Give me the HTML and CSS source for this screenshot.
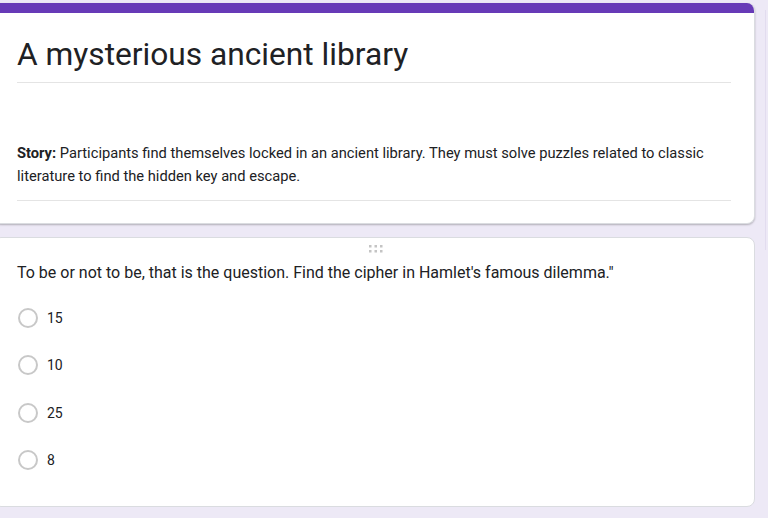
FILE: index.html
```html
<!DOCTYPE html>
<html>
<head>
<meta charset="utf-8">
<link rel="stylesheet" href="styles.css">
</head>
<body>
<div class="page">
  <div class="card header-card">
    <div class="accent"></div>
    <div class="header-body">
      <h1 class="title">A mysterious ancient library</h1>
      <div class="divider"></div>
      <p class="story"><b>Story:</b> Participants find themselves locked in an ancient library. They must solve puzzles related to classic literature to find the hidden key and escape.</p>
      <div class="divider"></div>
    </div>
  </div>
  <div class="card question-card">
    <div class="handle">
      <svg width="14" height="8" viewBox="0 0 14 8"><g fill="#c4c4c4"><rect x="0" y="0" width="2.5" height="2.5"/><rect x="5.5" y="0" width="2.5" height="2.5"/><rect x="11" y="0" width="2.5" height="2.5"/><rect x="0" y="5" width="2.5" height="2.5"/><rect x="5.5" y="5" width="2.5" height="2.5"/><rect x="11" y="5" width="2.5" height="2.5"/></g></svg>
    </div>
    <div class="question">To be or not to be, that is the question. Find the cipher in Hamlet's famous dilemma."</div>
    <div class="options">
      <label class="option"><span class="radio"></span><span class="label">15</span></label>
      <label class="option"><span class="radio"></span><span class="label">10</span></label>
      <label class="option"><span class="radio"></span><span class="label">25</span></label>
      <label class="option"><span class="radio"></span><span class="label">8</span></label>
    </div>
  </div>
</div>
<div class="scrollbar"></div>
</body>
</html>
```
FILE: styles.css
```css
html, body {
  margin: 0;
  padding: 0;
  background: #ede9f6;
  font-family: Roboto, "Liberation Sans", Arial, sans-serif;
  color: #202124;
  overflow: hidden;
  height: 518px;
}
.page {
  width: 762px;
  margin-left: -7px;
  padding-top: 3px;
  display: flex;
  flex-direction: column;
  gap: 13px;
}
.card {
  background: #fff;
  border-radius: 8px;
  border: 1px solid #dadce0;
  box-sizing: border-box;
}
.header-card {
  overflow: hidden;
  border-top: none;
  box-shadow: 0 1px 2px rgba(0,0,0,0.25);
  height: 221px;
}
.accent {
  height: 10px;
  background: #673ab7;
}
.header-body {
  padding: 0 23px 0 23px;
}
.title {
  margin: 0;
  padding-top: 22px;
  font-size: 31.7px;
  font-weight: 400;
  line-height: 40px;
  height: 47px;
  color: #202124;
}
.divider {
  height: 1px;
  background: #e4e4e4;
}
.story {
  margin: 0;
  padding: 59px 0 12px 0;
  font-size: 14.7px;
  line-height: 23px;
  color: #202124;
}
.story b { font-weight: 700; }
.question-card {
  height: 270px;
  padding: 0 23px;
}
.handle {
  height: 15px;
  display: flex;
  justify-content: center;
  align-items: flex-end;
  padding-left: 4px;
}
.handle svg { display: block; }
.question {
  margin-top: 8px;
  font-size: 16px;
  line-height: 24px;
  color: #202124;
}
.options {
  margin-top: 23px;
  display: flex;
  flex-direction: column;
  gap: 27.4px;
}
.option {
  display: flex;
  align-items: center;
  height: 20px;
}
.radio {
  width: 20px;
  height: 20px;
  border: 2px solid #c8c8c8;
  border-radius: 50%;
  box-sizing: border-box;
  margin-left: 1px;
}
.label {
  margin-left: 9px;
  font-size: 14px;
  color: #202124;
}
.scrollbar {
  position: absolute;
  left: 765px;
  top: 10px;
  width: 1px;
  height: 240px;
  background: #e2dcef;
}
```
